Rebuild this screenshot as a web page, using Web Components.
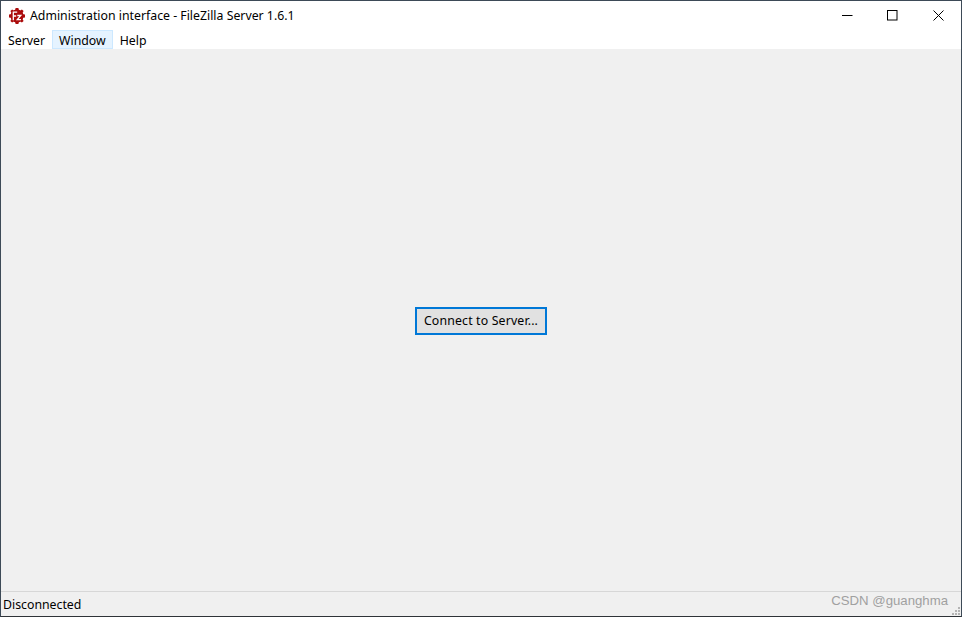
<!DOCTYPE html>
<html>
<head>
<meta charset="utf-8">
<title>Administration interface - FileZilla Server 1.6.1</title>
<style>
  html, body { margin: 0; height: 100%; }
  body { font: 12.3px "Noto Sans", "Open Sans", sans-serif; color: #000; overflow: hidden; }
</style>
</head>
<body>
<app-window>
  <title-bar slot="title">Administration interface - FileZilla Server 1.6.1</title-bar>
  <menu-bar slot="menu">
    <menu-item>Server</menu-item>
    <menu-item active>Window</menu-item>
    <menu-item>Help</menu-item>
  </menu-bar>
  <connect-pane>Connect to Server...</connect-pane>
  <status-bar slot="status" note="CSDN @guanghma">Disconnected</status-bar>
</app-window>

<script>
function define(name, css, html, setup) {
  const template = document.createElement("template");
  template.innerHTML = `<style>${css}</style>${html}`;
  customElements.define(name, class extends HTMLElement {
    constructor() {
      super().attachShadow({ mode: "open" }).appendChild(template.content.cloneNode(true));
    }
    connectedCallback() {
      if (setup) setup(this);
    }
  });
}

define("app-window", `
  :host {
    display: flex;
    flex-direction: column;
    box-sizing: border-box;
    width: 962px;
    height: 617px;
    border: 1px solid #3d4a57;
    border-bottom-color: #2f3338;
    background: #f0f0f0;
  }
  .main { flex: 1; display: flex; min-height: 0; }
`, `
  <slot name="title"></slot>
  <slot name="menu"></slot>
  <div class="main"><slot></slot></div>
  <slot name="status"></slot>
`);

define("title-bar", `
  :host {
    display: flex;
    align-items: center;
    height: 29px;
    background: #fff;
    flex: none;
  }
  .icon { width: 16px; height: 16px; margin: 0 5px 0 8px; flex: none; }
  .text { flex: 1; white-space: nowrap; padding-bottom: 1px; }
  .btns { display: flex; align-self: stretch; }
  .btn { width: 45px; display: flex; align-items: center; justify-content: center; }
  .btn.max { margin-right: 1px; }
  .btn svg { width: 11px; height: 11px; display: block; }
`, `
  <svg class="icon" viewBox="0 0 16 16">
    <path fill="#ab0c0c" d="M6.600 0h2.800l.4 1.800 1.500.6L12.900 1.400l1.700 1.700-1 1.600.6 1.500 1.800.4v2.800l-1.800.4-.6 1.500 1 1.600-1.700 1.700-1.600-1-1.500.6-.4 1.800H6.600l-.4-1.800-1.500-.6-1.600 1-1.700-1.700 1-1.600-.6-1.500L0 9.400V6.600l1.800-.4.6-1.500-1-1.600 1.700-1.700 1.600 1 1.500-.6z"/>
    <circle cx="8" cy="8" r="6.400" fill="#ab0c0c"/>
    <path fill="none" stroke="#fff" stroke-width="1.300" d="M4.300 12.200V4.200H8.200M4.300 8H7.200M8.300 7.500h3.500L8.300 11.700h3.700"/>
  </svg>
  <span class="text"><slot></slot></span>
  <div class="btns">
    <div class="btn"><svg viewBox="0 0 11 11"><path d="M0 5.500h10.500" stroke="#000" stroke-width="1"/></svg></div>
    <div class="btn max"><svg viewBox="0 0 11 11"><rect x=".5" y=".5" width="9.500" height="9.500" fill="none" stroke="#000"/></svg></div>
    <div class="btn"><svg viewBox="0 0 11 11"><path d="M.5.500l10 10M10.500.500l-10 10" stroke="#000" stroke-width="1"/></svg></div>
  </div>
`);

define("menu-bar", `
  :host {
    display: flex;
    height: 19px;
    background: #fff;
    flex: none;
  }
`, `<slot></slot>`);

define("menu-item", `
  :host {
    display: flex;
    align-items: center;
    box-sizing: border-box;
    padding: 1px 6px 0;
    border: 1px solid transparent;
    white-space: nowrap;
  }
  :host([active]) { background: #e5f3ff; border-color: #cce8ff; }
`, `<slot></slot>`);

define("connect-pane", `
  :host {
    flex: 1;
    display: flex;
    align-items: center;
    justify-content: center;
  }
  button {
    box-sizing: border-box;
    width: 132px;
    height: 28px;
    margin-top: 2px;
    padding: 0 0 2px;
    font: inherit;
    letter-spacing: .16px;
    color: inherit;
    background: #e1e1e1;
    border: 2px solid #0078d7;
    border-radius: 0;
  }
`, `<button><slot></slot></button>`);

define("status-bar", `
  :host {
    display: flex;
    align-items: center;
    justify-content: space-between;
    position: relative;
    box-sizing: border-box;
    height: 25px;
    flex: none;
    padding: 1px 13px 0 2px;
    border-top: 1px solid #d7d7d7;
    background: #f0f0f0;
  }
  .note { color: #a0a0a0; font: 13.200px "Liberation Sans", sans-serif; margin-top: -8px; }
  svg { position: absolute; right: 0; bottom: 0; width: 11px; height: 11px; }
`, `
  <span><slot></slot></span>
  <span class="note"></span>
  <svg viewBox="0 0 11 11" fill="#b4b4b4">
    <rect x="8" y="2" width="2" height="2"/>
    <rect x="5" y="5" width="2" height="2"/><rect x="8" y="5" width="2" height="2"/>
    <rect x="2" y="8" width="2" height="2"/><rect x="5" y="8" width="2" height="2"/><rect x="8" y="8" width="2" height="2"/>
  </svg>
`, (el) => {
  el.shadowRoot.querySelector(".note").textContent = el.getAttribute("note");
});
</script>
</body>
</html>
